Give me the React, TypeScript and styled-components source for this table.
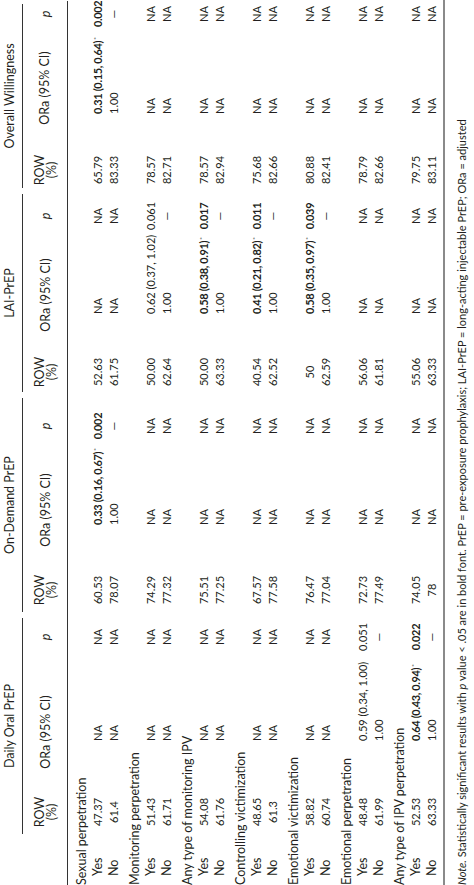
import React from 'react';
import styled, { createGlobalStyle } from 'styled-components';

const GlobalStyle = createGlobalStyle`
  html, body { margin: 0; padding: 0; background: #fff; }
`;

// The printed table is set sideways on the page, so the whole sheet is turned
const Viewport = styled.div`
  width: 474px; height: 885px; overflow: hidden; background: #fff;
`;
const Sheet = styled.div`
  width: 885px; height: 474px; transform-origin: 0 0; transform: translateY(885px) rotate(-90deg);
  font-family: Lato, "Open Sans", "DejaVu Sans", sans-serif; font-size: 11px; color: #231f20;
`;
const Grid = styled.div`
  display: grid;
  grid-template-columns: 48px 50px 128px 44px 50px 124px 46px 46px 108px 50px 42px 122px 26px;
  padding-bottom: 4px;
`;
const Blank = styled.div``;
const GroupTitle = styled.div`
  grid-column: span 3; text-align: center; height: 23px; box-sizing: border-box; padding-top: 3px;
  font-size: 12.5px; line-height: 14px; border-bottom: 1px solid #333; margin: 0 3px; white-space: nowrap;
`;
const SubHead = styled.div<{ $pr?: number }>`
  display: flex; flex-direction: column; justify-content: center; align-items: center;
  height: 44px; padding: 1px ${p => p.$pr ?? 0}px 0 0; box-sizing: border-box;
  font-size: 12.5px; line-height: 11.5px; white-space: nowrap;
`;
const P = styled.i``;
const Rule = styled.div<{ $thick?: boolean }>`
  grid-column: 1 / -1; height: ${p => (p.$thick ? 2 : 1)}px; background: ${p => (p.$thick ? '#8a8a8a' : '#333')};
`;
const Section = styled.div`
  grid-column: 1 / -1; height: 22px; box-sizing: border-box; padding-top: 6px;
  font-size: 12.5px; line-height: 16px; white-space: nowrap;
`;
const RowLabel = styled.div<{ $h: number }>`
  height: ${p => p.$h}px; line-height: ${p => p.$h}px; padding-left: 9px; font-size: 12.5px; white-space: nowrap;
`;
const Cell = styled.div<{ $h: number; $pad?: number; $pr?: number; $bold?: boolean }>`
  height: ${p => p.$h}px; line-height: ${p => p.$h}px; white-space: nowrap; box-sizing: border-box;
  text-align: ${p => (p.$pad === undefined ? 'center' : 'left')};
  padding-left: ${p => p.$pad ?? 0}px;
  padding-right: ${p => p.$pr ?? 0}px;
  font-weight: ${p => (p.$bold ? 700 : 400)};
  letter-spacing: ${p => (p.$bold ? '-0.35px' : '0')};
`;
const Star = styled.sup`
  font-size: 6px; font-weight: 400; vertical-align: 4px; line-height: 0; margin-left: 1px; letter-spacing: 0;
`;
const Note = styled.div`
  margin-top: 10px; line-height: 14px; white-space: nowrap; font-size: 11px;
`;

type V = string | { v: string; b?: boolean; s?: boolean };

const B = (v: string, s = false): V => ({ v, b: true, s });

const groups: { label: string; rows: V[][] }[] = [
  { label: 'Sexual perpetration', rows: [
    ['Yes', '47.37', 'NA', 'NA', '60.53', B('0.33 (0.16, 0.67)', true), B('0.002'), '52.63', 'NA', 'NA', '65.79', B('0.31 (0.15, 0.64)', true), B('0.002')],
    ['No', '61.4', 'NA', 'NA', '78.07', '1.00', '—', '61.75', 'NA', 'NA', '83.33', '1.00', '—'],
  ] },
  { label: 'Monitoring perpetration', rows: [
    ['Yes', '51.43', 'NA', 'NA', '74.29', 'NA', 'NA', '50.00', '0.62 (0.37, 1.02)', '0.061', '78.57', 'NA', 'NA'],
    ['No', '61.71', 'NA', 'NA', '77.32', 'NA', 'NA', '62.64', '1.00', '—', '82.71', 'NA', 'NA'],
  ] },
  { label: 'Any type of monitoring IPV', rows: [
    ['Yes', '54.08', 'NA', 'NA', '75.51', 'NA', 'NA', '50.00', B('0.58 (0.38, 0.91)', true), B('0.017'), '78.57', 'NA', 'NA'],
    ['No', '61.76', 'NA', 'NA', '77.25', 'NA', 'NA', '63.33', '1.00', '—', '82.94', 'NA', 'NA'],
  ] },
  { label: 'Controlling victimization', rows: [
    ['Yes', '48.65', 'NA', 'NA', '67.57', 'NA', 'NA', '40.54', B('0.41 (0.21, 0.82)', true), B('0.011'), '75.68', 'NA', 'NA'],
    ['No', '61.3', 'NA', 'NA', '77.58', 'NA', 'NA', '62.52', '1.00', '—', '82.66', 'NA', 'NA'],
  ] },
  { label: 'Emotional victimization', rows: [
    ['Yes', '58.82', 'NA', 'NA', '76.47', 'NA', 'NA', '50', B('0.58 (0.35, 0.97)', true), B('0.039'), '80.88', 'NA', 'NA'],
    ['No', '60.74', 'NA', 'NA', '77.04', 'NA', 'NA', '62.59', '1.00', '—', '82.41', 'NA', 'NA'],
  ] },
  { label: 'Emotional perpetration', rows: [
    ['Yes', '48.48', '0.59 (0.34, 1.00)', '0.051', '72.73', 'NA', 'NA', '56.06', 'NA', 'NA', '78.79', 'NA', 'NA'],
    ['No', '61.99', '1.00', '—', '77.49', 'NA', 'NA', '61.81', 'NA', 'NA', '82.66', 'NA', 'NA'],
  ] },
  { label: 'Any type of IPV perpetration', rows: [
    ['Yes', '52.53', B('0.64 (0.43, 0.94)', true), B('0.022'), '74.05', 'NA', 'NA', '55.06', 'NA', 'NA', '79.75', 'NA', 'NA'],
    ['No', '63.33', '1.00', '—', '78', 'NA', 'NA', '63.33', 'NA', 'NA', '83.11', 'NA', 'NA'],
  ] },
];

const titles = ['Daily Oral PrEP', 'On-Demand PrEP', 'LAI-PrEP', 'Overall Willingness'];

// per data column: pad = left-aligned values with that indent, pr = shift of a centred column,
// hpr = shift of the column heading
type Col = { pad?: number; pr?: number; hpr?: number };
const cols: Col[] = [
  {}, { pad: 46, hpr: 18 }, {},
  {}, { pad: 40, hpr: 14 }, { pr: 16, hpr: 16 },
  {}, { pad: 35 }, {},
  {}, { pad: 35, hpr: -4 }, {},
];

export default function App() {
  return (
    <Viewport>
      <GlobalStyle />
      <Sheet>
        <Grid>
          <Blank />
          {titles.map(t => <GroupTitle key={t}>{t}</GroupTitle>)}

          <Blank />
          {titles.map((t, gi) => (
            <React.Fragment key={t}>
              <SubHead $pr={cols[gi * 3].hpr}><span>ROW</span><span>(%)</span></SubHead>
              <SubHead $pr={cols[gi * 3 + 1].hpr}>ORa (95% CI)</SubHead>
              <SubHead $pr={cols[gi * 3 + 2].hpr}><P>p</P></SubHead>
            </React.Fragment>
          ))}
          <Rule />

          {groups.map(g => (
            <React.Fragment key={g.label}>
              <Section>{g.label}</Section>
              {g.rows.map((r, ri) => {
                const h = ri === 0 ? 16 : 15;
                return (
                  <React.Fragment key={ri}>
                    <RowLabel $h={h}>{r[0] as string}</RowLabel>
                    {r.slice(1).map((c, ci) => {
                      const val = typeof c === 'string' ? { v: c } : c;
                      const col = cols[ci];
                      return (
                        <Cell key={ci} $h={h} $bold={val.b} $pad={col.pad} $pr={col.pr}>
                          {val.v}
                          {val.s && <Star>*</Star>}
                        </Cell>
                      );
                    })}
                  </React.Fragment>
                );
              })}
            </React.Fragment>
          ))}
        </Grid>
        <Rule $thick />
        <Note>
          <i>Note.</i> Statistically significant results with <i>p</i> value &lt; .05 are in bold font. PrEP = pre-exposure prophylaxis; LAI-PrEP = long-acting injectable PrEP; ORa = adjusted
        </Note>
      </Sheet>
    </Viewport>
  );
}
